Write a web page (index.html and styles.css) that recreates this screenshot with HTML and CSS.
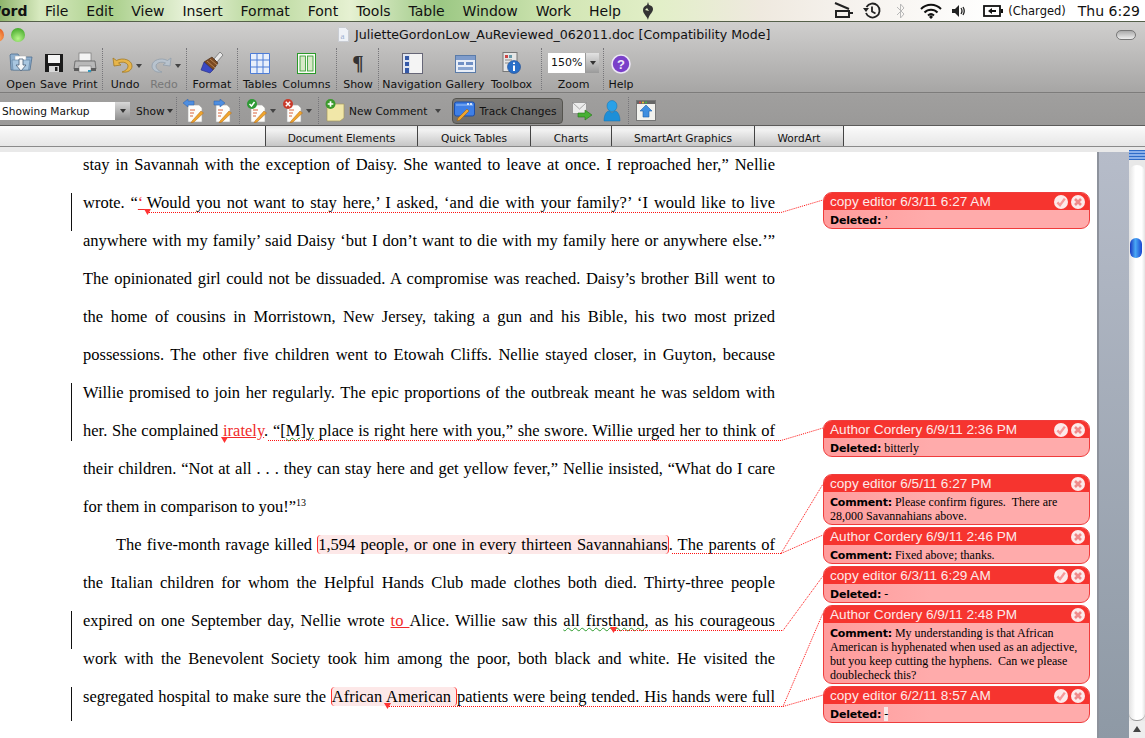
FILE: index.html
```html
<!DOCTYPE html>
<html lang="en">
<head>
    <meta charset="UTF-8">
    <title>JulietteGordonLow_AuReviewed_062011.doc</title>
    <link rel="stylesheet" href="styles.css">
</head>
<body>
    <!-- icons used more than once -->
    <svg class="sprites" width="0" height="0">
        <symbol id="ok" viewBox="0 0 14 14">
            <circle cx="7" cy="7" r="7" fill="#fdeaea"/>
            <path d="M3.4 7.4 L6 10.2 L10.8 3.6" fill="none" stroke="#f79a9a" stroke-width="2.4"/>
        </symbol>
        <symbol id="no" viewBox="0 0 14 14">
            <circle cx="7" cy="7" r="7" fill="#fdeaea"/>
            <path d="M4 4 L10 10 M10 4 L4 10" fill="none" stroke="#f08a8a" stroke-width="2.6"/>
        </symbol>
        <symbol id="page" viewBox="0 0 22 24">
            <path d="M5 6 H16 L19 9 V23 H5 Z" fill="#fdfdfa" stroke="#aaa" stroke-width=".6"/>
            <path d="M7 11 H12 M7 14 H11 M7 17 H10" stroke="#d9643c" stroke-width="1"/>
            <path d="M9 22 L18 12 L20.500 14 L11 23 L8 24 Z" fill="#f0a52c" stroke="#a8641a" stroke-width=".5"/>
        </symbol>
    </svg>

    <!-- menu bar -->
    <header class="menubar">
        <nav class="menus">
            <b class="app-name">Word</b>
            <span>File</span><span>Edit</span><span>View</span><span>Insert</span><span>Format</span>
            <span>Font</span><span>Tools</span><span>Table</span><span>Window</span><span>Work</span><span>Help</span>
            <svg class="script-icon" width="12" height="18" viewBox="0 0 12 18">
                <path d="M6 0 L7 3 C11 4 12 7 10 10 C9 12 7 13 6 18 C5 14 1 12 1 8 C1 5 3 4 5 3 Z M5 6 L3 8 L7 9 Z" fill="#333" fill-rule="evenodd"/>
            </svg>
        </nav>
        <div class="status">
            <svg class="st-scan" width="20" height="17" viewBox="0 0 20 17">
                <path d="M1 1 L15 7 M2 9 H15 V15 H2 Z M15 11 H19" fill="none" stroke="#222" stroke-width="2"/>
            </svg>
            <svg class="st-time" width="18" height="18" viewBox="0 0 18 18">
                <path d="M3.500 5 A7 7 0 1 1 3 11 M9 4.500 V9.500 L12.500 11.500" fill="none" stroke="#222" stroke-width="1.800"/>
                <path d="M0 6 H6 L3 10 Z" fill="#222"/>
            </svg>
            <svg class="st-bt" width="9" height="16" viewBox="0 0 9 16">
                <path d="M1 4 L8 11 L4.500 15 V1 L8 5 L1 12" fill="none" stroke="#b9b9b9" stroke-width="1"/>
            </svg>
            <svg class="st-wifi" width="22" height="16" viewBox="0 0 22 16">
                <path d="M1 6 A14 14 0 0 1 21 6 M4.500 9.500 A9 9 0 0 1 17.500 9.500 M8 12.500 A4.500 4.500 0 0 1 14 12.500" fill="none" stroke="#111" stroke-width="2"/>
                <path d="M9 14 L11 12 L13 14 L11 16 Z" fill="#111"/>
            </svg>
            <svg class="st-vol" width="14" height="14" viewBox="0 0 14 14">
                <path d="M0 5 H3 L7 1 V13 L3 9 H0 Z" fill="#222"/>
                <path d="M9 4 Q11 7 9 10 M11 3 Q13.500 7 11 11" fill="none" stroke="#222" stroke-width="1.300"/>
            </svg>
            <svg class="st-batt" width="20" height="12" viewBox="0 0 20 12">
                <rect x="1" y="1" width="16" height="10" fill="none" stroke="#111" stroke-width="1.800"/>
                <rect x="18" y="4" width="2" height="4" fill="#111"/>
                <path d="M5 6 L9 3 V5 H13 V7 H9 V9 Z" fill="#111"/>
            </svg>
            <span class="charged">(Charged)</span>
            <span class="clock">Thu 6:29</span>
        </div>
    </header>

    <!-- window chrome -->
    <section class="chrome">
        <div class="titlebar">
            <i class="light light-red"></i>
            <i class="light light-green"></i>
            <svg class="doc-icon" width="11" height="15" viewBox="0 0 11 15">
                <path d="M.5 .5 H7.500 L10.500 3.500 V14.500 H.5 Z" fill="#eef1f6" stroke="#c9ccd2"/>
                <text x="2.500" y="12" font-size="9" fill="#9db0cf" font-family="Liberation Serif, serif">a</text>
            </svg>
            <span class="doc-title">JulietteGordonLow_AuReviewed_062011.doc [Compatibility Mode]</span>
            <i class="pill"></i>
        </div>

        <div class="toolbar">
            <div class="tool">
                <svg width="26" height="24" viewBox="0 0 26 24">
                    <path d="M2 5 L3 20 H22 L24 7 H12 L10 4 H3 Z" fill="#8fb0cf" stroke="#4f6f8f" stroke-width=".8"/>
                    <path d="M7 6 H18 V12 H7 Z" fill="#fff" stroke="#aaa" stroke-width=".5"/>
                    <path d="M4 10 H22 L20.500 20 H5 Z" fill="#a8c6e0" stroke="#5e7f9f" stroke-width=".6"/>
                    <path d="M11 9 H15 V15 H18 L13 21 L8 15 H11 Z" fill="#f4f6f8" stroke="#4a5f78" stroke-width=".8"/>
                </svg>
                <span>Open</span>
            </div>
            <div class="tool">
                <svg width="22" height="22" viewBox="0 0 22 22">
                    <path d="M2 2 H20 V20 H2 Z" fill="#1b1b1b"/>
                    <rect x="5" y="3" width="12" height="8" fill="#f4f4f4"/>
                    <rect x="6" y="14" width="10" height="6" fill="#d8d8d8"/>
                    <rect x="12" y="15" width="2.500" height="4" fill="#222"/>
                </svg>
                <span>Save</span>
            </div>
            <div class="tool">
                <svg width="24" height="22" viewBox="0 0 24 22">
                    <rect x="6" y="1" width="12" height="8" fill="#f4f4f4" stroke="#777" stroke-width=".7"/>
                    <path d="M2 9 H22 L23 17 H1 Z" fill="#b8b8b8" stroke="#555" stroke-width=".7"/>
                    <rect x="1" y="16" width="22" height="3" fill="#5d5d5d"/>
                    <rect x="6" y="14" width="12" height="6" fill="#eee" stroke="#666" stroke-width=".5"/>
                    <rect x="15" y="18" width="3" height="2" fill="#2f9ac0"/>
                </svg>
                <span>Print</span>
            </div>
            <i class="sep"></i>
            <div class="tool">
                <div class="icon-drop">
                    <svg width="21" height="17" viewBox="0 0 21 17">
                        <path d="M1 1 L2 9 L9 8 L6.500 6 C11 4 16 6 16 9 C16 12 13 14 10 15 C16 16 20 13 20 9 C20 3 11 0 4.500 3.500 Z" fill="#e7b54a" stroke="#a27a24" stroke-width=".8"/>
                    </svg>
                    <i class="caret"></i>
                </div>
                <span>Undo</span>
            </div>
            <div class="tool tool-off">
                <div class="icon-drop">
                    <svg width="21" height="17" viewBox="0 0 21 17">
                        <path d="M20 1 L19 9 L12 8 L14.500 6 C10 4 5 6 5 9 C5 12 8 14 11 15 C5 16 1 13 1 9 C1 3 10 0 16.500 3.500 Z" fill="#b9c6d3" stroke="#8c9baa" stroke-width=".8"/>
                    </svg>
                    <i class="caret"></i>
                </div>
                <span>Redo</span>
            </div>
            <i class="sep"></i>
            <div class="tool">
                <svg width="24" height="23" viewBox="0 0 24 23">
                    <path d="M14 8 L20 1 L23 4 L17 11 Z" fill="#e8e8e8" stroke="#666" stroke-width=".7"/>
                    <path d="M4 11 L12 6 L18 12 L13 19 Z" fill="#7b4a22" stroke="#3e2410" stroke-width=".6"/>
                    <path d="M7 10 L15 17 M10 8 L17 14" stroke="#b98654" stroke-width="1"/>
                    <path d="M4 11 L13 19 L10 22 L1 19 Z" fill="#3b49c4" stroke="#222a80" stroke-width=".6"/>
                </svg>
                <span>Format</span>
            </div>
            <i class="sep"></i>
            <div class="tool">
                <svg width="20" height="21" viewBox="0 0 20 21">
                    <path d="M.5 .5 H19.500 V20.500 H.5 Z" fill="#e8effb" stroke="#4d7cd6"/>
                    <path d="M7 0 V21 M13 0 V21 M0 7 H20 M0 14 H20" stroke="#4d7cd6"/>
                </svg>
                <span>Tables</span>
            </div>
            <div class="tool">
                <svg width="19" height="21" viewBox="0 0 19 21">
                    <rect x=".5" y=".5" width="18" height="20" fill="#fbfbf6" stroke="#2a9a2a"/>
                    <rect x="3" y="3" width="5.500" height="15" fill="#d9e8c8" stroke="#2a9a2a" stroke-width=".8"/>
                    <rect x="10.500" y="3" width="5.500" height="15" fill="#d9e8c8" stroke="#2a9a2a" stroke-width=".8"/>
                </svg>
                <span>Columns</span>
            </div>
            <i class="sep"></i>
            <div class="tool">
                <span class="pilcrow">¶</span>
                <span>Show</span>
            </div>
            <i class="sep"></i>
            <div class="tool">
                <svg width="21" height="21" viewBox="0 0 21 21">
                    <rect x=".5" y=".5" width="20" height="20" fill="#f4f4f4" stroke="#667"/>
                    <rect x="1" y="1" width="7" height="19" fill="#dfe5f0"/>
                    <rect x="3" y="3" width="4" height="4" fill="#3559a8"/>
                    <rect x="3" y="9" width="4" height="4" fill="#3559a8"/>
                    <rect x="3" y="15" width="4" height="5" fill="#3559a8"/>
                </svg>
                <span>Navigation</span>
            </div>
            <div class="tool">
                <svg width="21" height="19" viewBox="0 0 21 19">
                    <rect x=".5" y=".5" width="20" height="17" fill="#e8eef8" stroke="#5a7ba8"/>
                    <rect x="1" y="1" width="19" height="4" fill="#7f9ccb"/>
                    <rect x="3" y="7" width="6" height="3" fill="#6f8fc4"/>
                    <rect x="11" y="7" width="7" height="3" fill="#6f8fc4"/>
                    <rect x="3" y="12" width="15" height="3" fill="#8aa6d2"/>
                </svg>
                <span>Gallery</span>
            </div>
            <div class="tool">
                <svg width="19" height="22" viewBox="0 0 19 22">
                    <rect x="1" y=".5" width="14" height="19" fill="#e6e6e6" stroke="#777"/>
                    <rect x="3" y="3" width="3" height="3" fill="#c44"/>
                    <rect x="7" y="3" width="3" height="3" fill="#69a"/>
                    <path d="M3 8 H10 M3 11 H7" stroke="#888"/>
                    <circle cx="12" cy="15" r="6.500" fill="#2a6fc8" stroke="#1b4a90" stroke-width=".6"/>
                    <path d="M12 10.500 V12 M12 13.500 V19" stroke="#fff" stroke-width="2"/>
                </svg>
                <span>Toolbox</span>
            </div>
            <i class="sep"></i>
            <div class="tool">
                <div class="zoom-box"><span class="zoom-val">150%</span><span class="zoom-arrow"><i class="caret caret-dark"></i></span></div>
                <span>Zoom</span>
            </div>
            <i class="sep"></i>
            <div class="tool">
                <svg width="20" height="20" viewBox="0 0 20 20">
                    <circle cx="10" cy="10" r="9" fill="#7a3fc9" stroke="#ece6f5" stroke-width="1.600"/>
                    <text x="10" y="15" font-size="13" font-weight="bold" text-anchor="middle" fill="#f1ecfa" font-family="Liberation Sans, sans-serif">?</text>
                </svg>
                <span>Help</span>
            </div>
        </div>

        <div class="reviewbar">
            <div class="markup-select"><span>Showing Markup</span><span class="select-arrow"><i class="caret caret-dark"></i></span></div>
            <div class="show-menu">Show<i class="caret caret-dark"></i></div>
            <i class="sep-small sep-a"></i>
            <svg class="page-icon" width="22" height="24" viewBox="0 0 22 24">
                <use href="#page"/>
                <path d="M0 4 L5 0 V2 H11 V6 H5 V8 Z" fill="#4f8fe0" stroke="#2a5ea8" stroke-width=".5"/>
            </svg>
            <svg class="page-icon" width="22" height="24" viewBox="0 0 22 24">
                <use href="#page"/>
                <path d="M14 4 L9 0 V2 H3 V6 H9 V8 Z" fill="#4f8fe0" stroke="#2a5ea8" stroke-width=".5"/>
            </svg>
            <i class="sep-small sep-b"></i>
            <svg class="page-icon page-icon-drop" width="22" height="24" viewBox="0 0 22 24">
                <use href="#page"/>
                <circle cx="6" cy="5" r="5" fill="#2f9a35"/>
                <path d="M3.500 5 L5.500 7 L8.500 3" fill="none" stroke="#fff" stroke-width="1.500"/>
            </svg>
            <i class="caret caret-gap"></i>
            <svg class="page-icon page-icon-drop" width="22" height="24" viewBox="0 0 22 24">
                <use href="#page"/>
                <circle cx="6" cy="5" r="5" fill="#c93a2a"/>
                <path d="M3.800 2.800 L8.200 7.200 M8.200 2.800 L3.800 7.200" stroke="#fff" stroke-width="1.500"/>
            </svg>
            <i class="caret caret-gap"></i>
            <i class="sep-small sep-c"></i>
            <svg class="note-icon" width="20" height="23" viewBox="0 0 20 23">
                <path d="M2 5 H19 V19 L15 22 H2 Z" fill="#f1e7a8" stroke="#a59a60" stroke-width=".7"/>
                <circle cx="5.500" cy="5" r="5" fill="#3c9a2c"/>
                <path d="M5.500 2.200 V7.800 M2.700 5 H8.300" stroke="#fff" stroke-width="1.700"/>
            </svg>
            <span class="new-comment">New Comment</span>
            <i class="caret caret-comment"></i>
            <div class="track">
                <svg width="22" height="22" viewBox="0 0 22 22">
                    <rect x=".5" y="2" width="20" height="14" rx="2" fill="#3f7fe6" stroke="#1d4ea8"/>
                    <path d="M2 5 H19" stroke="#9cc2f7"/>
                    <circle cx="14" cy="4" r="1" fill="#fff"/>
                    <circle cx="17" cy="4" r="1" fill="#fff"/>
                    <path d="M4 18 L13 9 L15 11 L6 20 L3 21 Z" fill="#f0a52c" stroke="#8a5714" stroke-width=".5"/>
                </svg>
                <span>Track Changes</span>
            </div>
            <svg class="mail-icon" width="21" height="20" viewBox="0 0 21 20">
                <rect x=".5" y="1.500" width="14" height="11" fill="#ececec" stroke="#888" stroke-width=".7"/>
                <path d="M1 2 L7.500 8 L14 2" fill="none" stroke="#888" stroke-width=".7"/>
                <path d="M6 12 H13 V9 L20 14 L13 19 V16 H6 Z" fill="#47b034" stroke="#26731a" stroke-width=".6"/>
            </svg>
            <svg class="person-icon" width="18" height="22" viewBox="0 0 18 22">
                <ellipse cx="9" cy="6" rx="5" ry="5.500" fill="#2aa1e8" stroke="#1270b0" stroke-width=".5"/>
                <path d="M1 21 C1 14 4 11 6 11 L9 13 L12 11 C14 11 17 14 17 21 Z" fill="#1d8fd8" stroke="#1270b0" stroke-width=".5"/>
            </svg>
            <i class="sep-small sep-d"></i>
            <svg class="web-icon" width="20" height="22" viewBox="0 0 20 22">
                <rect x=".5" y=".5" width="19" height="20" fill="#f2f2ee" stroke="#777"/>
                <rect x="1" y="1" width="18" height="3" fill="#666"/>
                <circle cx="4" cy="2.500" r="1" fill="#e44"/><circle cx="7" cy="2.500" r="1" fill="#ec3"/><circle cx="10" cy="2.500" r="1" fill="#4b4"/>
                <path d="M10 5 L16 11 H13 V17 H7 V11 H4 Z" fill="#3f8fe0" stroke="#1d5fa8" stroke-width=".6"/>
            </svg>
        </div>

        <div class="ribbon-tabs">
            <span class="tab tab-elements">Document Elements</span>
            <span class="tab tab-quick">Quick Tables</span>
            <span class="tab tab-charts">Charts</span>
            <span class="tab tab-smart">SmartArt Graphics</span>
            <span class="tab tab-wordart">WordArt</span>
        </div>
    </section>

    <!-- document -->
    <main class="doc">
        <div class="page">
            <div class="text">
                <p class="line">stay in Savannah with the exception of Daisy. She wanted to leave at once. I reproached her,” Nellie</p>
                <p class="line">wrote. “<ins>‘&#8201;</ins>Would you not want to stay here,’ I asked, ‘and die with your family?’ ‘I would like to live</p>
                <p class="line">anywhere with my family’ said Daisy ‘but I don’t want to die with my family here or anywhere else.’”</p>
                <p class="line">The opinionated girl could not be dissuaded. A compromise was reached. Daisy’s brother Bill went to</p>
                <p class="line">the home of cousins in Morristown, New Jersey, taking a gun and his Bible, his two most prized</p>
                <p class="line">possessions. The other five children went to Etowah Cliffs. Nellie stayed closer, in Guyton, because</p>
                <p class="line">Willie promised to join her regularly. The epic proportions of the outbreak meant he was seldom with</p>
                <p class="line">her. She complained <ins>irately</ins>. “<span class="spell">[M]y</span> place is right here with you,” she swore. Willie urged her to think of</p>
                <p class="line">their children. “Not at all . . . they can stay here and get yellow fever,” Nellie insisted, “What do I care</p>
                <p class="line line-end">for them in comparison to you!”<sup>13</sup></p>
                <p class="line line-indent">The five-month ravage killed <mark>1,594 people, or one in every thirteen Savannahians</mark>. The parents of</p>
                <p class="line">the Italian children for whom the Helpful Hands Club made clothes both died. Thirty-three people</p>
                <p class="line">expired on one September day, Nellie wrote <ins>to&nbsp;</ins>Alice. Willie saw this <span class="spell">all firsthand</span>, as his courageous</p>
                <p class="line">work with the Benevolent Society took him among the poor, both black and white. He visited the</p>
                <p class="line">segregated hospital to make sure the <mark>African American&nbsp;</mark>patients were being tended. His hands were full</p>
            </div>
            <aside class="balloons">
                <div class="balloon">
                    <div class="balloon-head">copy editor 6/3/11 6:27 AM<span class="actions"><svg><use href="#ok"/></svg><svg><use href="#no"/></svg></span></div>
                    <div class="balloon-body"><b>Deleted:</b> ’</div>
                </div>
                <div class="balloon balloon-author">
                    <div class="balloon-head">Author Cordery 6/9/11 2:36 PM<span class="actions"><svg><use href="#ok"/></svg><svg><use href="#no"/></svg></span></div>
                    <div class="balloon-body"><b>Deleted:</b> bitterly</div>
                </div>
                <div class="balloon balloon-stack">
                    <div class="balloon-head">copy editor 6/5/11 6:27 PM<span class="actions"><svg><use href="#no"/></svg></span></div>
                    <div class="balloon-body"><b>Comment:</b> Please confirm figures.&nbsp; There are 28,000 Savannahians above.</div>
                </div>
                <div class="balloon">
                    <div class="balloon-head">Author Cordery 6/9/11 2:46 PM<span class="actions"><svg><use href="#no"/></svg></span></div>
                    <div class="balloon-body"><b>Comment:</b> Fixed above; thanks.</div>
                </div>
                <div class="balloon">
                    <div class="balloon-head">copy editor 6/3/11 6:29 AM<span class="actions"><svg><use href="#ok"/></svg><svg><use href="#no"/></svg></span></div>
                    <div class="balloon-body"><b>Deleted:</b> -</div>
                </div>
                <div class="balloon">
                    <div class="balloon-head">Author Cordery 6/9/11 2:48 PM<span class="actions"><svg><use href="#no"/></svg></span></div>
                    <div class="balloon-body"><b>Comment:</b> My understanding is that African American is hyphenated when used as an adjective, but you keep cutting the hyphens.&nbsp; Can we please doublecheck this?</div>
                </div>
                <div class="balloon">
                    <div class="balloon-head">copy editor 6/2/11 8:57 AM<span class="actions"><svg><use href="#ok"/></svg><svg><use href="#no"/></svg></span></div>
                    <div class="balloon-body"><b>Deleted:</b> <span class="picked">-</span></div>
                </div>
            </aside>
        </div>
        <div class="rail"></div>
        <div class="scrollbar">
            <div class="split-box"></div>
            <div class="thumb"><i class="knob"></i></div>
            <div class="arrow-up"></div>
        </div>
    </main>

    <!-- change bars and balloon leaders, drawn over the page -->
    <svg class="leaders" width="1145" height="738" viewBox="0 0 1145 738">
        <g stroke="#111" stroke-width="1">
            <path d="M71.500 193 V231 M71.500 383 V441 M71.500 611 V649 M71.500 687 V721"/>
        </g>
        <g fill="none" stroke="#f11" stroke-width="1" stroke-dasharray="1 1">
            <path d="M147 212.500 H781 L823 200"/>
            <path d="M268 440.500 H781 L823 428"/>
            <path d="M672 553.500 H781 L823 484 M781 553.500 L823 535"/>
            <path d="M613 630.500 H783 L823 576"/>
            <path d="M387 706.500 H783 L823 613 M783 706.500 L823 695"/>
        </g>
        <g fill="#f33">
            <path d="M144 209 H151 L147.500 215 Z"/>
            <path d="M221 437 H228 L224.500 443 Z"/>
            <path d="M610 627 H617 L613.500 633 Z"/>
            <path d="M384 703 H391 L387.500 709 Z"/>
        </g>
    </svg>
</body>
</html>
```

FILE: styles.css
```css
* {
    margin: 0;
    padding: 0;
    box-sizing: border-box;
}

html, body {
    height: 100%;
    overflow: hidden;
}

body {
    position: relative;
    display: flex;
    flex-direction: column;
    background: #fff;
    color: #111;
    font-family: "DejaVu Sans", sans-serif;
}

.sprites {
    position: absolute;
}

/* menu bar */
.menubar {
    height: 22px;
    flex: none;
    display: flex;
    justify-content: space-between;
    align-items: center;
    border-bottom: 1px solid #55604a;
    background: linear-gradient(90deg, #8fb46c 0, #d8eac0 40px, #a9cf8a 110px, #eaf3dc 190px, #b7d79a 260px, #e6f1d2 350px, #9cc884 440px, #d2e6b4 560px, #e2efc8 660px, #efe9df 760px, #f5f1ec 840px, #fff 1000px);
    font-size: 14px;
}

.menus {
    display: flex;
    align-items: center;
    margin-left: -14px;
}

.menus span {
    margin-left: 17.9px;
}

.app-name {
    font-size: 14px;
    margin-right: -.4px;
}

.script-icon {
    margin-left: 21px;
}

.status {
    display: flex;
    align-items: center;
    padding-right: 5px;
}

.st-time { margin-left: 9px; }
.st-bt { margin-left: 15px; }
.st-wifi { margin-left: 15px; }
.st-vol { margin-left: 10px; }
.st-batt { margin-left: 17px; }

.charged {
    font-size: 11.5px;
    margin-left: 5px;
}

.clock {
    font-size: 14px;
    margin-left: 12px;
}

/* window chrome */
.chrome {
    flex: none;
    background: linear-gradient(#d0cfce, #a6a5a4 71px, #a09f9e 72px, #9a9998 104px);
}

.titlebar {
    height: 25px;
    display: flex;
    align-items: center;
}

.light {
    display: block;
    width: 14px;
    height: 14px;
    border-radius: 50%;
}

.light-red {
    margin-left: -10px;
    background: radial-gradient(circle at 50% 70%, #ffb56a, #e04a10);
}

.light-green {
    margin-left: 7px;
    background: radial-gradient(circle at 50% 75%, #b7f58a, #2f9a18);
}

.doc-icon {
    margin-left: 313px;
}

.doc-title {
    margin-left: 6px;
    font-size: 12.6px;
}

.pill {
    display: block;
    width: 20px;
    height: 10px;
    margin-left: auto;
    margin-right: 9px;
    border-radius: 5px;
    border: 1px solid #777;
    background: linear-gradient(#aaa, #eee);
}

.toolbar {
    height: 46px;
    padding-left: 5px;
    display: grid;
    grid-template-columns: 32px 33px 30px 5px 40px 38px 7px 44px 6px 40px 53px 7px 36px 4px 64px 42px 51px 8px 57px 3px 32px;
    border-bottom: 1px solid #7d7c7b;
}

.tool {
    display: flex;
    flex-direction: column;
    align-items: center;
    justify-content: flex-end;
    gap: 4px;
    padding-bottom: 1px;
    font-size: 11px;
    white-space: nowrap;
}

.tool svg {
    flex: none;
}

.tool-off span {
    color: #777;
}

.tool-off svg {
    opacity: .85;
}

.sep {
    justify-self: center;
    height: 42px;
    margin-top: 1px;
    border-left: 1px dotted #77767a;
}

.icon-drop {
    display: flex;
    align-items: center;
    gap: 3px;
    padding-left: 4px;
}

.caret {
    display: inline-block;
    width: 0;
    height: 0;
    border-left: 3px solid transparent;
    border-right: 3px solid transparent;
    border-top: 4px solid #444;
}

.pilcrow {
    font-family: "Liberation Serif", serif;
    font-size: 21px;
    font-weight: bold;
    line-height: 22px;
    color: #333;
}

.zoom-box {
    display: flex;
    width: 51px;
    height: 20px;
    margin-bottom: 1px;
    background: #fff;
}

.zoom-val {
    width: 37px;
    font-size: 11px;
    line-height: 20px;
    padding-left: 3px;
}

.zoom-arrow {
    flex: 1;
    display: flex;
    align-items: center;
    justify-content: center;
    background: linear-gradient(#e2e2e2, #9a9a9a);
    border-left: 1px solid #999;
}

.caret-dark {
    border-top-color: #333;
}

.reviewbar {
    height: 33px;
    display: flex;
    align-items: center;
    padding-top: 3px;
    font-size: 10.6px;
    border-bottom: 1px solid #5c5b5a;
}

.markup-select {
    width: 130px;
    height: 18px;
    display: flex;
    background: #fff;
    line-height: 18px;
    padding-left: 2px;
    justify-content: space-between;
}

.select-arrow {
    width: 15px;
    display: flex;
    align-items: center;
    justify-content: center;
    background: linear-gradient(#d8d8d8, #8f8f8f);
}

.show-menu {
    display: flex;
    align-items: center;
    gap: 2px;
    margin-left: 6px;
    width: 40px;
}

.sep-small {
    display: block;
    height: 27px;
    border-left: 1px dotted #77767a;
}

.sep-a {
    margin-right: 6px;
}

.sep-b {
    margin-right: 6px;
}

.sep-c {
    margin-right: 6px;
}

.sep-d {
    margin: 0 7px;
}

.page-icon {
    margin-right: 6px;
}

.page-icon-drop {
    margin-right: 2px;
}

.caret-gap {
    margin-right: 6px;
}

.new-comment {
    margin-left: 4px;
}

.caret-comment {
    margin: 0 11px 0 8px;
}

.track {
    width: 111px;
    height: 26px;
    display: flex;
    align-items: center;
    gap: 3px;
    padding-left: 1px;
    border: 1px solid #55544f;
    border-radius: 4px;
    background: linear-gradient(#7c7b79, #6f6e6c);
    white-space: nowrap;
}

.mail-icon {
    margin-left: 9px;
}

.person-icon {
    margin-left: 10px;
}

.ribbon-tabs {
    height: 21px;
    display: flex;
    padding-left: 265px;
    background: linear-gradient(#fbfbfb, #e6e6e6);
    border-bottom: 1px solid #8a8a8a;
}

.tab {
    display: block;
    text-align: center;
    font-size: 10.6px;
    line-height: 24px;
    border-left: 1px solid #444;
    background: linear-gradient(#e6e6e6, #f2f2f2 4px, #c6c6c6);
}

.tab-elements { width: 152px; }
.tab-quick { width: 113px; }
.tab-charts { width: 81px; }
.tab-smart { width: 143px; }
.tab-wordart { width: 90px; border-right: 1px solid #444; }

/* document */
.doc {
    flex: 1;
    min-height: 0;
    display: flex;
    border-top: 5px solid #e9e9e9;
}

.page {
    width: 1097px;
    display: flex;
    align-items: flex-start;
    overflow: hidden;
}

.text {
    flex: none;
    width: 692px;
    margin: -6px 0 0 83px;
    font-family: "Liberation Serif", serif;
    font-size: 16.5px;
    color: #000;
}

.line {
    height: 38px;
    line-height: 38px;
    text-align: justify;
    text-align-last: justify;
}

.line-end {
    text-align-last: left;
}

.line-indent {
    text-indent: 33px;
}

sup {
    font-size: 10px;
    line-height: 0;
}

ins {
    color: #f02a2a;
    text-decoration: underline;
}

mark {
    color: inherit;
    background: #fde8e8;
    border-left: 1px solid #f33;
    border-right: 1px solid #f33;
    border-radius: 4px;
}

.spell {
    text-decoration: underline wavy #2b9a2b 1px;
}

/* balloons */
.balloons {
    flex: none;
    width: 267px;
    margin: 40px 0 0 48px;
    display: flex;
    flex-direction: column;
    gap: 2px;
}

.balloon {
    border: 1px solid #ef3c3c;
    border-radius: 9px;
    overflow: hidden;
    background: linear-gradient(90deg, #ff9c9c, #ffabab 40%);
}

.balloon-author {
    margin-top: 189px;
}

.balloon-stack {
    margin-top: 15px;
}

.balloon-head {
    height: 17px;
    display: flex;
    justify-content: space-between;
    align-items: center;
    padding: 0 4px 0 6px;
    background: #f6342f;
    color: #fdeaea;
    font-family: "Liberation Sans", sans-serif;
    font-size: 13.6px;
    white-space: nowrap;
}

.actions {
    display: flex;
    gap: 3px;
}

.actions svg {
    display: block;
    width: 14px;
    height: 14px;
}

.balloon-body {
    padding: 3px 6px 1px;
    font-family: "Liberation Serif", serif;
    font-size: 12px;
    line-height: 14px;
    color: #000;
}

.balloon-body b {
    font-family: "DejaVu Sans", sans-serif;
    font-size: 11px;
    line-height: 1;
    letter-spacing: -.2px;
}

.picked {
    background: #f4e9e9;
}

/* right rail and scrollbar */
.rail {
    width: 32px;
    border-left: 2px solid #8d929c;
    background: linear-gradient(#b6bcc9, #8e99a5);
}

.scrollbar {
    width: 16px;
    display: flex;
    flex-direction: column;
    background: #e8e8e8;
}

.split-box {
    height: 10px;
    margin-top: -2px;
    background: repeating-linear-gradient(#2f6cc8 0, #2f6cc8 1px, #8ab0ea 1px, #8ab0ea 3px);
}

.thumb {
    position: relative;
    flex: 1;
    margin-top: 5px;
    border-radius: 9px 9px 8px 8px;
    border-bottom: 1px solid #999;
    background: linear-gradient(90deg, #e2e2e2, #fff 40%, #fff 80%, #e4e4e4);
}

.knob {
    position: absolute;
    top: 73px;
    left: 1px;
    width: 12px;
    height: 20px;
    border-radius: 6px;
    background: linear-gradient(90deg, #1a38c0, #49a8f5 45%, #1a46d0);
}

.arrow-up {
    height: 17px;
    position: relative;
    background: #eee;
}

.arrow-up::after {
    content: "";
    position: absolute;
    left: 4px;
    top: 5px;
    border-left: 4px solid transparent;
    border-right: 4px solid transparent;
    border-bottom: 6px solid #444;
}

.leaders {
    position: absolute;
    top: 0;
    left: 0;
    pointer-events: none;
}
```
